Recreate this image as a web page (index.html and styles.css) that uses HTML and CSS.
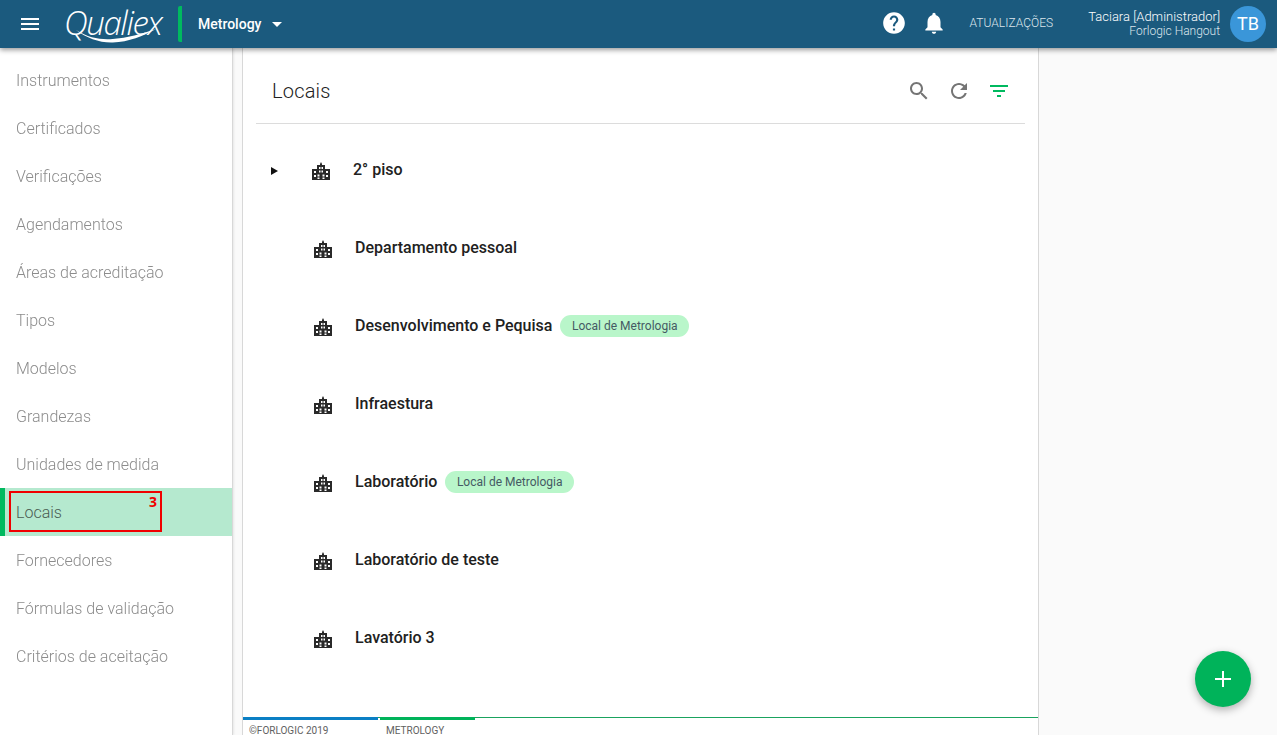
FILE: index.html
```html
<!DOCTYPE html>
<html lang="pt-BR">
<head>
    <meta charset="UTF-8">
    <meta name="viewport" content="width=device-width, initial-scale=1.0">
    <title>Locais - Qualiex</title>
    <link rel="stylesheet" href="styles.css">
</head>
<body>

<svg class="defs" width="0" height="0">
    <symbol id="building" viewBox="0 0 18 18">
        <path fill-rule="evenodd" d="M9 0l1 2v1h3v4h5v11H0V7h5V3h3V2zM7 5v2h1.500V5zM9.500 5v2H11V5zM7 8.500v2h1.500v-2zM9.500 8.500v2H11v-2zM2 9v2h2V9zM14 9v2h2V9zM2 13v2h2v-2zM5.500 12.500v2h2v-2zM10.500 12.500v2h2v-2zM14 13v2h2v-2zM5.500 15.500V17h2v-1.500zM10.500 15.500V17h2v-1.500z"/>
    </symbol>
</svg>

<header class="topbar">
    <button class="menu-btn" aria-label="Menu">
        <svg viewBox="0 0 24 24" width="24" height="24"><path d="M3 18h18v-2H3v2zm0-5h18v-2H3v2zm0-7v2h18V6H3z"/></svg>
    </button>
    <div class="logo">
        <span class="logo-text">Qualiex</span>
        <svg class="logo-swoosh" viewBox="0 0 100 14" width="80" height="14" preserveAspectRatio="none"><path d="M0 1c16 8 31 10 46 9 18-1 36-5 54-10-16 7-34 13-54 13.500C30 14 13 9 0 1z"/></svg>
    </div>
    <span class="module-mark"></span>
    <div class="module">
        <span>Metrology</span>
        <svg viewBox="0 0 24 24" width="24" height="24"><path d="M7 10l5 5 5-5z"/></svg>
    </div>
    <div class="topbar-right">
        <svg class="top-icon" viewBox="0 0 24 24" width="26" height="26"><path d="M12 2C6.480 2 2 6.480 2 12s4.480 10 10 10 10-4.480 10-10S17.520 2 12 2zm1 17h-2v-2h2v2zm2.070-7.750l-.9.920C13.450 12.900 13 13.500 13 15h-2v-.5c0-1.100.45-2.100 1.170-2.830l1.240-1.260c.37-.36.59-.86.59-1.410 0-1.100-.9-2-2-2s-2 .9-2 2H8c0-2.210 1.790-4 4-4s4 1.790 4 4c0 .88-.36 1.680-.93 2.250z"/></svg>
        <svg class="top-icon" viewBox="0 0 24 24" width="26" height="26"><path d="M12 22c1.100 0 2-.9 2-2h-4c0 1.100.89 2 2 2zm6-6v-5c0-3.070-1.640-5.640-4.500-6.320V4c0-.83-.67-1.500-1.500-1.500s-1.500.67-1.500 1.500v.68C7.630 5.360 6 7.920 6 11v5l-2 2v1h16v-1l-2-2z"/></svg>
        <span class="updates">ATUALIZAÇÕES</span>
        <div class="user">
            <span class="user-name">Taciara [Administrador]</span>
            <span class="user-org">Forlogic Hangout</span>
        </div>
        <span class="avatar">TB</span>
    </div>
</header>

<div class="layout">
    <nav class="sidebar">
        <a class="nav-item">Instrumentos</a>
        <a class="nav-item">Certificados</a>
        <a class="nav-item">Verificações</a>
        <a class="nav-item">Agendamentos</a>
        <a class="nav-item">Áreas de acreditação</a>
        <a class="nav-item">Tipos</a>
        <a class="nav-item">Modelos</a>
        <a class="nav-item">Grandezas</a>
        <a class="nav-item">Unidades de medida</a>
        <a class="nav-item active">Locais<span class="callout">3</span></a>
        <a class="nav-item">Fornecedores</a>
        <a class="nav-item">Fórmulas de validação</a>
        <a class="nav-item">Critérios de aceitação</a>
    </nav>

    <main class="card">
        <div class="card-head">
            <h1>Locais</h1>
            <div class="tools">
                <svg viewBox="0 0 24 24" width="24" height="24"><path d="M15.500 14h-.79l-.28-.27C15.410 12.590 16 11.110 16 9.500 16 5.910 13.090 3 9.500 3S3 5.910 3 9.500 5.910 16 9.500 16c1.610 0 3.090-.59 4.230-1.570l.27.28v.79l5 4.990L20.490 19l-4.990-5zm-6 0C7.010 14 5 11.990 5 9.500S7.010 5 9.500 5 14 7.010 14 9.500 11.990 14 9.500 14z"/></svg>
                <svg viewBox="0 0 24 24" width="24" height="24"><path d="M17.650 6.350C16.200 4.900 14.210 4 12 4c-4.420 0-7.990 3.580-7.990 8s3.570 8 7.990 8c3.730 0 6.840-2.550 7.730-6h-2.080c-.82 2.330-3.040 4-5.650 4-3.310 0-6-2.690-6-6s2.690-6 6-6c1.660 0 3.140.69 4.220 1.780L13 11h7V4l-2.350 2.350z"/></svg>
                <svg class="tool-on" viewBox="0 0 24 24" width="24" height="24"><path d="M10 18h4v-2h-4v2zM3 6v2h18V6H3zm3 7h12v-2H6v2z"/></svg>
            </div>
        </div>

        <ul class="tree">
            <li class="tree-row parent">
                <span class="arrow"></span>
                <svg class="building"><use href="#building"/></svg>
                <span class="tree-name">2° piso</span>
            </li>
            <li class="tree-row">
                <svg class="building"><use href="#building"/></svg>
                <span class="tree-name">Departamento pessoal</span>
            </li>
            <li class="tree-row">
                <svg class="building"><use href="#building"/></svg>
                <span class="tree-name">Desenvolvimento e Pequisa</span>
                <span class="tag">Local de Metrologia</span>
            </li>
            <li class="tree-row">
                <svg class="building"><use href="#building"/></svg>
                <span class="tree-name">Infraestura</span>
            </li>
            <li class="tree-row">
                <svg class="building"><use href="#building"/></svg>
                <span class="tree-name">Laboratório</span>
                <span class="tag">Local de Metrologia</span>
            </li>
            <li class="tree-row">
                <svg class="building"><use href="#building"/></svg>
                <span class="tree-name">Laboratório de teste</span>
            </li>
            <li class="tree-row">
                <svg class="building"><use href="#building"/></svg>
                <span class="tree-name">Lavatório 3</span>
            </li>
        </ul>

        <footer class="card-foot">
            <span class="foot-copy">©FORLOGIC 2019</span>
            <span class="foot-module">METROLOGY</span>
        </footer>
    </main>

    <aside class="side-space"></aside>
</div>

<button class="fab" aria-label="Adicionar">
    <svg viewBox="0 0 24 24" width="24" height="24"><path d="M20 13h-7v7h-2v-7H4v-2h7V4h2v7h7z"/></svg>
</button>

</body>
</html>
```

FILE: styles.css
```css
* {
    box-sizing: border-box;
}
html, body {
    height: 100%;
}
body {
    margin: 0;
    font-family: 'Roboto', 'Liberation Sans', sans-serif;
    background-color: #fafafa;
    color: #212121;
    display: flex;
    flex-direction: column;
    overflow: hidden;
}
.defs {
    position: absolute;
}

/* barra superior */
.topbar {
    height: 48px;
    flex: none;
    display: flex;
    align-items: center;
    padding-left: 18px;
    padding-right: 11px;
    background-color: #1b5a7e;
    color: #fff;
    box-shadow: 0 2px 5px rgba(0, 0, 0, 0.4);
    position: relative;
    z-index: 2;
}
.menu-btn {
    width: 24px;
    height: 24px;
    padding: 0;
    border: none;
    background: none;
    fill: #fff;
}
.logo {
    width: 100px;
    height: 40px;
    margin-left: 23px;
    margin-top: -1px;
    position: relative;
}
.logo-text {
    margin-left: -1px;
    font-family: 'Open Sans', sans-serif;
    font-style: italic;
    font-weight: 300;
    font-size: 33px;
    letter-spacing: -1.4px;
    line-height: 38px;
}
.logo-swoosh {
    position: absolute;
    left: 11px;
    top: 25px;
    fill: #fff;
}
.module-mark {
    width: 4px;
    height: 36px;
    margin-left: 13px;
    background-color: #00b95f;
    border-radius: 2px 0 0 2px;
}
.module {
    display: flex;
    align-items: center;
    margin-top: -1px;
    margin-left: 16px;
    font-size: 14px;
    font-weight: 500;
    fill: #fff;
    gap: 4px;
}
.topbar-right {
    margin-left: auto;
    display: flex;
    align-items: center;
}
.top-icon {
    fill: #fff;
    margin-top: -2px;
    margin-right: 14px;
}
.top-icon + .top-icon {
    margin-right: 22px;
}
.updates {
    margin-top: -2px;
    font-size: 12px;
    font-weight: 300;
    color: #dbe5ec;
    letter-spacing: 0.05px;
    margin-right: 35px;
}
.user {
    display: flex;
    flex-direction: column;
    align-items: flex-end;
    font-size: 13px;
    font-weight: 300;
    line-height: 14px;
}
.user-org {
    font-size: 12px;
    color: #dbe5ec;
}
.avatar {
    width: 36px;
    height: 36px;
    margin-left: 10px;
    border-radius: 50%;
    background-color: #3a96d9;
    font-size: 18px;
    line-height: 36px;
    text-align: center;
}

/* layout */
.layout {
    flex: 1;
    display: flex;
    min-height: 0;
}
.sidebar {
    width: 233px;
    flex: none;
    padding-top: 8px;
    background-color: #fff;
    border-right: 1px solid #d8d8d8;
    box-shadow: 1px 0 2px rgba(0, 0, 0, 0.08);
}
.nav-item {
    display: block;
    height: 48px;
    padding-left: 16px;
    font-size: 16px;
    font-weight: 300;
    line-height: 50px;
    color: #8c8c8c;
    filter: blur(0.7px);
    position: relative;
}
.nav-item.active {
    padding-left: 11px;
    border-left: 5px solid #00b95f;
    background-color: #b5e9cf;
    color: #4a5c52;
    filter: none;
}
.callout {
    position: absolute;
    left: 4px;
    top: 3px;
    width: 153px;
    height: 41px;
    border: 2px solid #f00000;
    color: #f00000;
    font-family: 'Open Sans', sans-serif;
    font-size: 14px;
    font-weight: 700;
    line-height: 17px;
    text-align: right;
    padding-right: 3px;
}
.card {
    width: 797px;
    flex: none;
    margin-left: 9px;
    display: flex;
    flex-direction: column;
    background-color: #fff;
    border-left: 1px solid #d8d8d8;
    border-right: 1px solid #d8d8d8;
}
.card-head {
    height: 76px;
    flex: none;
    margin: 0 13px 0 13px;
    padding: 10px 14px 0 16px;
    display: flex;
    align-items: center;
    justify-content: space-between;
    border-bottom: 1px solid #dcdcdc;
}
.card-head h1 {
    margin: 0;
    font-size: 20px;
    font-weight: 300;
    letter-spacing: 0.2px;
    color: #212121;
}
.tools {
    display: flex;
    gap: 16px;
    fill: #757575;
}
.tool-on {
    fill: #00b95f;
}

/* arvore de locais */
.tree {
    flex: 1;
    list-style: none;
    margin: 0;
    padding: 6px 0 0 71px;
}
.tree-row {
    height: 78px;
    display: flex;
    align-items: center;
}
.tree-row.parent {
    margin-left: -2px;
}
.arrow {
    width: 0;
    height: 0;
    margin-left: -41px;
    margin-right: 34px;
    margin-top: 4px;
    border-left: 7px solid #111;
    border-top: 4px solid transparent;
    border-bottom: 4px solid transparent;
}
.building {
    width: 18px;
    height: 18px;
    margin-top: 4px;
    flex: none;
    fill: #2a2a2a;
}
.tree-name {
    margin-left: 23px;
    font-size: 16px;
    font-weight: 500;
}
.tag {
    height: 22px;
    margin-top: 2px;
    margin-left: 7.5px;
    padding: 0 11.5px 0 12px;
    border-radius: 11px;
    background-color: #b9f6ca;
    font-size: 12px;
    line-height: 22px;
    color: #455a64;
}
.card-foot {
    height: 18px;
    flex: none;
    display: flex;
    border-top: 1px solid #1aa35e;
    font-size: 10px;
    color: #616161;
}
.foot-copy, .foot-module {
    margin-top: -1px;
    padding-top: 5px;
    padding-left: 6px;
    line-height: 12px;
}
.foot-copy {
    width: 135px;
    border-top: 3px solid #0a7fc4;
}
.foot-module {
    width: 95px;
    margin-left: 2px;
    border-top: 3px solid #00b35a;
}
.side-space {
    flex: 1;
}
.fab {
    position: absolute;
    left: 1195px;
    top: 651px;
    width: 56px;
    height: 56px;
    padding: 0;
    border: none;
    border-radius: 50%;
    background-color: #00b35a;
    fill: #fff;
    display: flex;
    align-items: center;
    justify-content: center;
    box-shadow: 0 3px 8px rgba(0, 0, 0, 0.3);
}
```
